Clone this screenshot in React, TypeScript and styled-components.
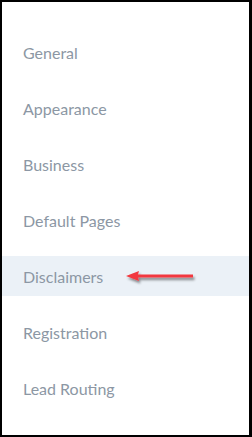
import React from "react";
import styled, { createGlobalStyle } from "styled-components";

const GlobalStyle = createGlobalStyle`
  html, body {
    margin: 0;
    padding: 0;
    background: #ffffff;
  }
  body {
    font-family: Lato, "Open Sans", sans-serif;
  }
`;

const Frame = styled.div`
  box-sizing: border-box;
  width: 252px;
  height: 437px;
  border: 2px solid #000;
  border-right-width: 3px;
  background: #fff;
`;

const Menu = styled.ul`
  list-style: none;
  margin: 0;
  padding: 30px 0 0;
  display: flex;
  flex-direction: column;
  gap: 16px;
`;

const Item = styled.li<{ $active?: boolean }>`
  position: relative;
  height: 40px;
  display: flex;
  align-items: center;
  padding-left: 21px;
  font-size: 16px;
  color: #8c97a4;
  background: ${(p) => (p.$active ? "#ebf1f7" : "transparent")};
`;

const Arrow = styled.svg`
  position: absolute;
  left: 121px;
  top: 12px;
  overflow: visible;
`;

const items = [
  "General",
  "Appearance",
  "Business",
  "Default Pages",
  "Disclaimers",
  "Registration",
  "Lead Routing",
];

const App = () => (
  <>
    <GlobalStyle />
    <Frame>
      <Menu>
        {items.map((label) => (
          <Item key={label} $active={label === "Disclaimers"}>
            {label}
            {label === "Disclaimers" && (
              <Arrow width="74" height="16" viewBox="0 0 74 16">
                <defs>
                  <filter id="sh" x="-20%" y="-50%" width="140%" height="200%">
                    <feDropShadow dx="1.5" dy="2.5" stdDeviation="1.3" floodColor="#000" floodOpacity="0.45" />
                  </filter>
                </defs>
                <g filter="url(#sh)">
                  <path d="M3 8 L16 3 L15 6.5 L70 6.5 L70 9.5 L15 9.5 L16 13 Z" fill="#f2393f" strokeLinejoin="round" />
                </g>
              </Arrow>
            )}
          </Item>
        ))}
      </Menu>
    </Frame>
  </>
);

export default App;
